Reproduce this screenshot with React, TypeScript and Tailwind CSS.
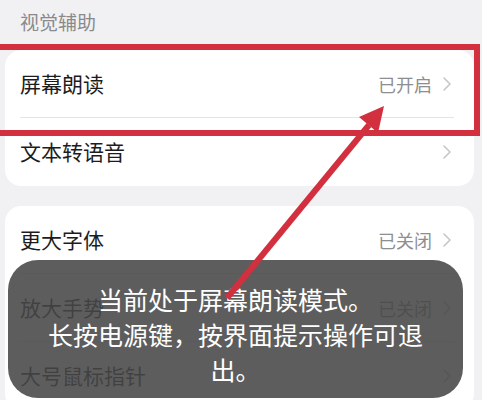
import React from 'react';

interface Row {
  title: string;
  value?: string;
}

const Chevron: React.FC = () => (
  <svg width="10" height="16" viewBox="0 0 10 16" className="ml-[10px]">
    <path d="M2 2 L8 8 L2 14" fill="none" stroke="#c6c6c8" strokeWidth="1.6" strokeLinecap="round" strokeLinejoin="round" />
  </svg>
);

const SettingRow: React.FC<{ row: Row; divider?: boolean }> = ({ row, divider }) => (
  <div className="relative flex h-[68px] items-center pl-[15px] pr-[22px]">
    <span className="flex-1 text-[21px] text-[#1c1c1e]">{row.title}</span>
    {row.value && <span className="text-[18px] text-[#8e8e90]">{row.value}</span>}
    <Chevron />
    {divider && <div className="absolute bottom-0 left-[15px] right-[20px] h-px bg-[#e4e4e6]" />}
  </div>
);

const App: React.FC = () => {
  const firstGroup: Row[] = [
    { title: '屏幕朗读', value: '已开启' },
    { title: '文本转语音' },
  ];
  const secondGroup: Row[] = [
    { title: '更大字体', value: '已关闭' },
    { title: '放大手势', value: '已关闭' },
    { title: '大号鼠标指针' },
  ];

  return (
    <div className="relative h-[400px] w-[482px] overflow-hidden bg-[#f1f1f3] font-['Noto_Sans_CJK_SC',sans-serif]">
      <div className="h-[50px] px-[20px] pt-[10px] text-[19px] leading-[24px] text-[#8a8a8c]">视觉辅助</div>

      <div className="flex flex-col gap-[20px] pl-[5px] pr-[8px]">
        <div className="rounded-[16px] bg-white">
          {firstGroup.map((row, i) => (
            <SettingRow key={row.title} row={row} divider={i === 0} />
          ))}
        </div>
        <div className="rounded-[16px] bg-white">
          {secondGroup.map((row, i) => (
            <SettingRow key={row.title} row={row} divider={i < secondGroup.length - 1} />
          ))}
        </div>
      </div>

      {/* red highlight box */}
      <div className="absolute left-[-8px] right-[2px] top-[44px] h-[92px] border-[6px] border-[#d2303f]" />

      {/* toast */}
      <div className="absolute left-[8px] top-[260px] h-[138px] w-[455px] rounded-[30px] bg-[#474747]/88 px-[38px] pt-[22px] text-center text-[25px] leading-[35px] text-white">
        <p>当前处于屏幕朗读模式。</p>
        <p>长按电源键，按界面提示操作可退出。</p>
      </div>

      {/* arrow */}
      <svg className="absolute left-0 top-0" width="482" height="400" viewBox="0 0 482 400">
        <line x1="227" y1="298" x2="369" y2="125" stroke="#d2303f" strokeWidth="6" />
        <polygon points="384,106 378,133 359,117" fill="#d2303f" />
      </svg>
    </div>
  );
};

export default App;
